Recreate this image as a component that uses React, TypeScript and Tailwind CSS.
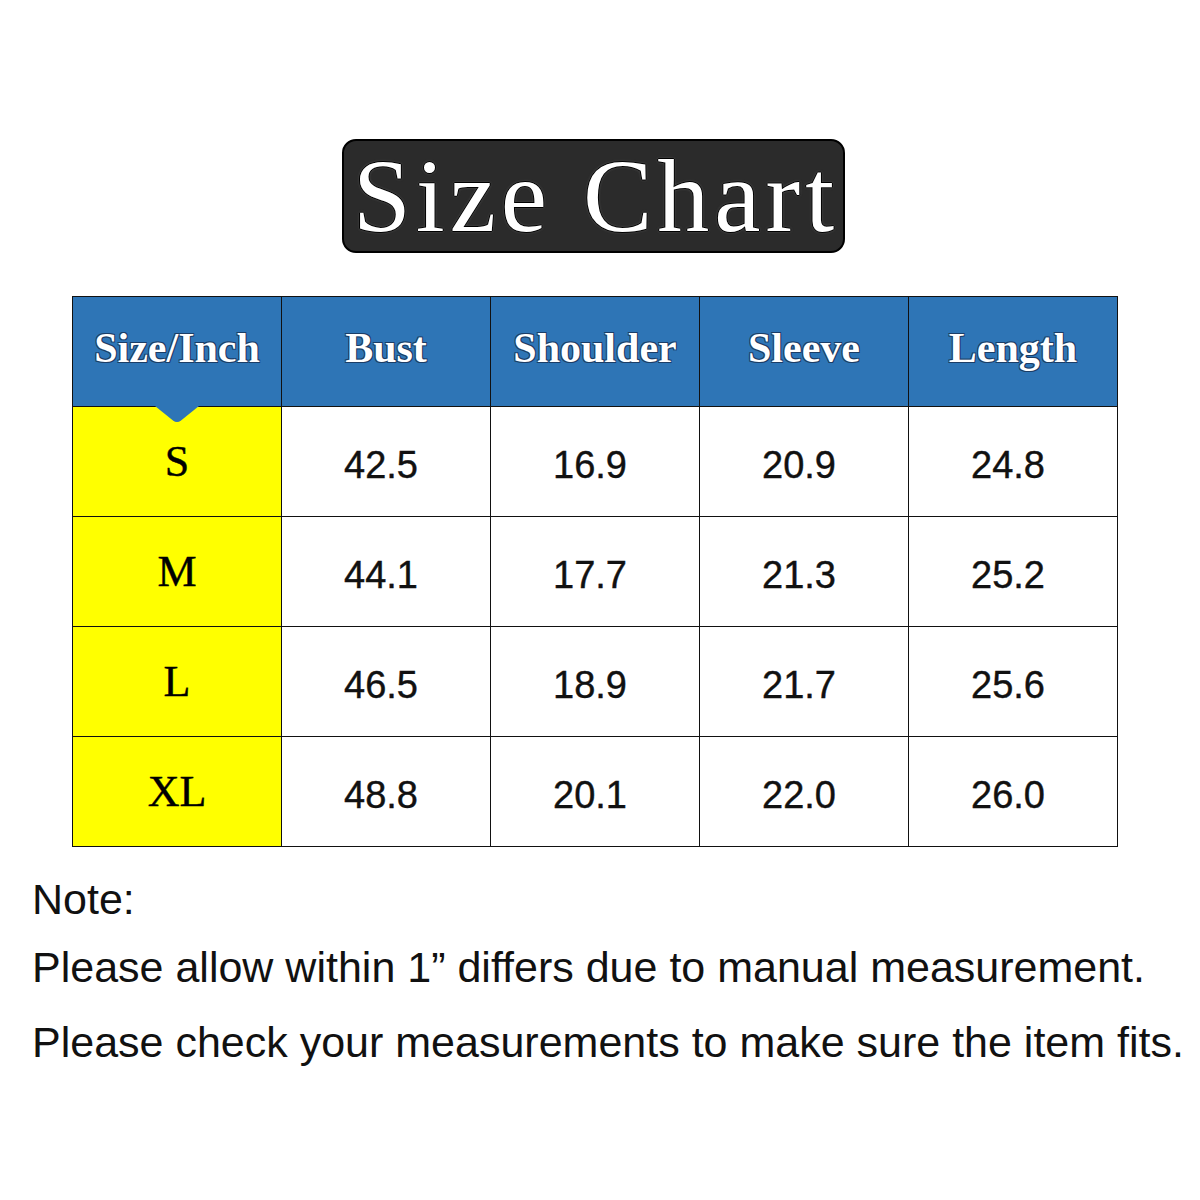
import React from "react";

const headers = ["Size/Inch", "Bust", "Shoulder", "Sleeve", "Length"];

const rows = [
  { size: "S", values: ["42.5", "16.9", "20.9", "24.8"] },
  { size: "M", values: ["44.1", "17.7", "21.3", "25.2"] },
  { size: "L", values: ["46.5", "18.9", "21.7", "25.6"] },
  { size: "XL", values: ["48.8", "20.1", "22.0", "26.0"] },
];

const serif = "font-['Liberation_Serif','Times_New_Roman',serif]";
const sans = "font-['Liberation_Sans',Arial,sans-serif]";

const App = () => {
  return (
    <div className="w-[1200px] h-[1200px] bg-white flex flex-col">
      {/* title badge */}
      <div className="mt-[139px] ml-[342px] w-[503px] h-[114px] rounded-[14px] border-2 border-black bg-[#2b2b2b] flex items-center justify-center">
        <span
          className={`${serif} text-[104px] leading-none tracking-[5px] text-white pl-[5px] [text-shadow:1px_0_0_#000,-1px_0_0_#000,0_1px_0_#000,0_-1px_0_#000,0_0_3px_#777]`}
        >
          Size Chart
        </span>
      </div>

      {/* table */}
      <div className="mt-[43px] ml-[72px] w-[1046px] grid grid-cols-[repeat(5,208px)] auto-rows-[109px] gap-px p-px bg-[#111]">
        {headers.map((h) => (
          <div
            key={h}
            className="bg-[#2e75b6] flex items-center justify-center pb-[6px]"
          >
            <span
              className={`${serif} font-bold text-[42px] text-white [text-shadow:1px_1px_0_#1b3d66,-1px_-1px_0_#1b3d66,1px_-1px_0_#1b3d66,-1px_1px_0_#1b3d66]`}
            >
              {h}
            </span>
          </div>
        ))}
        {rows.map((r, i) => (
          <React.Fragment key={r.size}>
            <div className="relative bg-[#ffff00] flex items-center justify-center">
              {i === 0 && (
                <svg
                  className="absolute -top-px left-[82px]"
                  width="44"
                  height="18"
                  viewBox="0 0 44 18"
                >
                  <path d="M0 0 L44 0 L26 14.5 Q22 17.5 18 14.5 Z" fill="#2e75b6" />
                </svg>
              )}
              <span className={`${serif} text-[44px] text-black [-webkit-text-stroke:0.4px_#000]`}>{r.size}</span>
            </div>
            {r.values.map((v, j) => (
              <div
                key={j}
                className="bg-white flex items-center justify-center pt-[7px] pr-[10px]"
              >
                <span className={`${sans} text-[38px] text-[#111] [-webkit-text-stroke:0.4px_#111]`}>
                  {v}
                </span>
              </div>
            ))}
          </React.Fragment>
        ))}
      </div>

      {/* notes */}
      <div className={`${sans} ml-[32px] text-[43px] leading-[43px] text-[#111]`}>
        <p className="mt-[31px]">Note:</p>
        <p className="mt-[25px] whitespace-nowrap">
          Please allow within 1” differs due to manual measurement.
        </p>
        <p className="mt-[32px] whitespace-nowrap">
          Please check your measurements to make sure the item fits.
        </p>
      </div>
    </div>
  );
};

export default App;
